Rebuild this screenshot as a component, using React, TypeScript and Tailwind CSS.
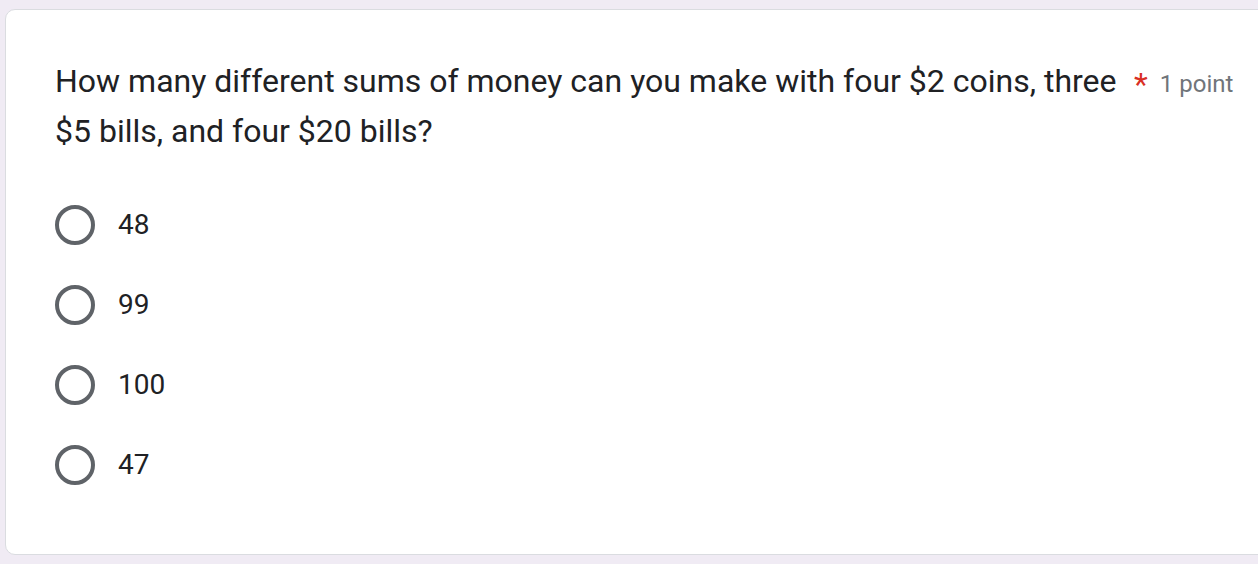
import React from "react";

const options = ["48", "99", "100", "47"];

export default function App() {
  return (
    <div className="w-[1258px] h-[564px] overflow-hidden bg-[#f0ebf4] pt-[9px] pl-[5px]" style={{ fontFamily: "Roboto, 'Noto Sans', sans-serif" }}>
      <div className="w-[1270px] h-[546px] bg-white rounded-[10px] border border-[#dadce0] pl-[49px] pt-[46px]">
        <div className="flex items-start w-[1200px]">
          <div className="w-[1070px] text-[32px] leading-[50px] text-[#202124] tracking-[0px]">
            How many different sums of money can you make with four $2 coins, three $5 bills, and four $20 bills?
          </div>
          <div className="flex items-start pt-[10px]">
            <span className="text-[#d93025] text-[32px] leading-[36px] ml-[9px]">*</span>
            <span className="text-[#70757a] text-[24px] leading-[36px] ml-[12px]">1 point</span>
          </div>
        </div>
        <div className="flex flex-col mt-[29px]">
          {options.map((o) => (
            <div key={o} className="flex items-center h-[80px]">
              <div className="w-[40px] h-[40px] rounded-full border-[4px] border-[#5f6368]" />
              <span className="ml-[23px] text-[28px] text-[#202124] leading-[40px]">{o}</span>
            </div>
          ))}
        </div>
      </div>
    </div>
  );
}
